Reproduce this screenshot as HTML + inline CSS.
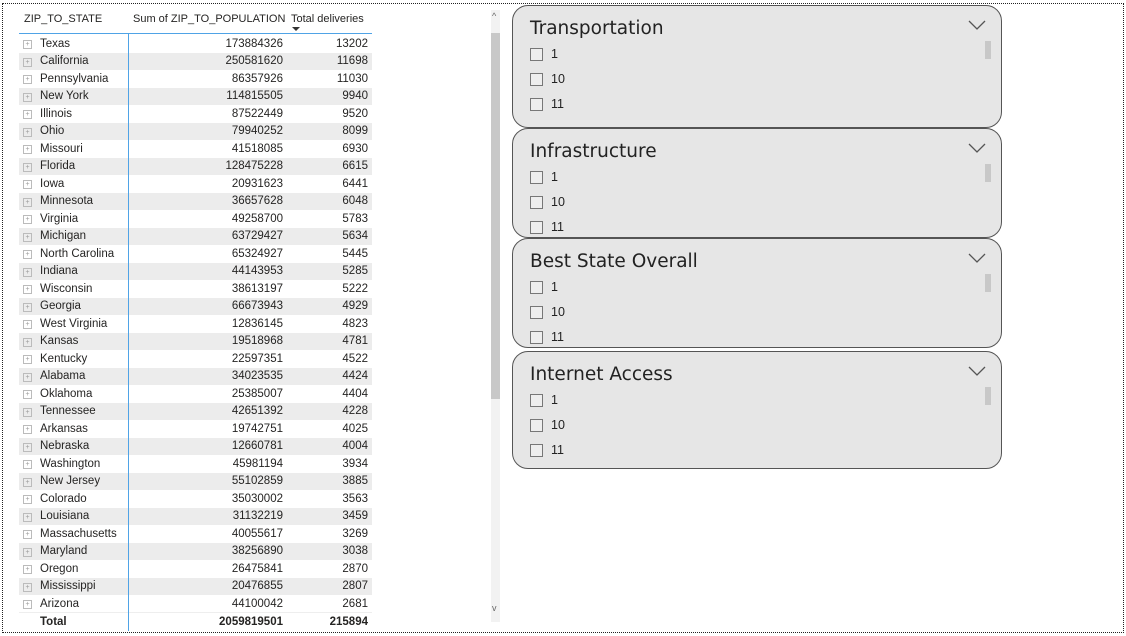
<!DOCTYPE html><html><head><style>
body{margin:0;width:1126px;height:636px;background:#fff;font-family:"Liberation Sans",sans-serif;position:relative;overflow:hidden;font-size:11.5px;color:#252423}
.frame{position:absolute;left:2px;top:3px;width:1120px;height:628px;border:1px dotted #222}
.a{position:absolute;white-space:nowrap}
.row{position:absolute;left:19px;width:353px;height:17.5px}
.row.s{background:#ececec}
.pl{position:absolute;left:4px;top:5px;width:7px;height:7px;border:1px solid #bbb;font-size:7px;line-height:7px;text-align:center;color:#999}
.card{position:absolute;left:512px;width:488px;background:#e6e6e6;border:1px solid #555;border-radius:16px;overflow:hidden}
.t{position:absolute;left:17px;font-family:"DejaVu Sans",sans-serif;font-size:18.5px;color:#222}
.cb{position:absolute;left:17px;width:11px;height:11px;border:1px solid #777;background:#eee}
.lb{position:absolute;left:38px;font-size:12.5px;color:#222}
.sb{position:absolute;left:472px;width:6px;height:18px;background:#c8c8c8}
.chev{position:absolute;left:455px;width:18px;height:10px}
</style></head><body>
<div class="frame"></div>
<div class="a" style="left:24px;top:13px;font-size:11px">ZIP_TO_STATE</div>
<div class="a" style="left:133px;top:13px;font-size:11px">Sum of ZIP_TO_POPULATION</div>
<div class="a" style="left:291px;top:13px;font-size:11px">Total deliveries</div>
<div class="a" style="left:292px;top:27px;width:0;height:0;border-left:4px solid transparent;border-right:4px solid transparent;border-top:4px solid #333"></div>
<div class="a" style="left:19px;top:33px;width:353px;height:1px;background:#4fa3e6"></div>
<div id="rows"></div>
<div class="a" style="left:128px;top:34px;width:1px;height:597px;background:#4fa3e6;z-index:2"></div>
<div class="a" style="left:19px;top:612px;width:353px;height:1px;background:#eee"></div>
<div class="a" style="left:40px;top:616px;font-weight:bold">Total</div>
<div class="a" style="left:183px;top:616px;width:100px;text-align:right;font-weight:bold">2059819501</div>
<div class="a" style="left:300px;top:616px;width:68px;text-align:right;font-weight:bold">215894</div>
<div class="a" style="left:491px;top:10px;width:9px;height:612px;background:#f2f2f2"></div>
<div class="a" style="left:491px;top:33px;width:9px;height:366px;background:#c8c8c8"></div>
<div class="a" style="left:492px;top:11px;font-size:9px;color:#666">^</div>
<div class="a" style="left:492px;top:603px;font-size:9px;color:#666">v</div>
<div id="cards"></div>
<script>
var d=[["Texas",173884326,13202],["California",250581620,11698],["Pennsylvania",86357926,11030],["New York",114815505,9940],["Illinois",87522449,9520],["Ohio",79940252,8099],["Missouri",41518085,6930],["Florida",128475228,6615],["Iowa",20931623,6441],["Minnesota",36657628,6048],["Virginia",49258700,5783],["Michigan",63729427,5634],["North Carolina",65324927,5445],["Indiana",44143953,5285],["Wisconsin",38613197,5222],["Georgia",66673943,4929],["West Virginia",12836145,4823],["Kansas",19518968,4781],["Kentucky",22597351,4522],["Alabama",34023535,4424],["Oklahoma",25385007,4404],["Tennessee",42651392,4228],["Arkansas",19742751,4025],["Nebraska",12660781,4004],["Washington",45981194,3934],["New Jersey",55102859,3885],["Colorado",35030002,3563],["Louisiana",31132219,3459],["Massachusetts",40055617,3269],["Maryland",38256890,3038],["Oregon",26475841,2870],["Mississippi",20476855,2807],["Arizona",44100042,2681]];
var h="";d.forEach(function(r,i){var y=35+i*17.5;h+='<div class="row'+(i%2?' s':'')+'" style="top:'+y+'px"><div class="pl">+</div><div class="a" style="left:21px;top:2.5px">'+r[0]+'</div><div class="a" style="left:164px;top:2.5px;width:100px;text-align:right">'+r[1]+'</div><div class="a" style="left:281px;top:2.5px;width:68px;text-align:right">'+r[2]+'</div></div>';});
document.getElementById("rows").innerHTML=h;
var c=[["Transportation",5,121],["Infrastructure",128,108],["Best State Overall",238,108],["Internet Access",351,116]];
var g="";c.forEach(function(k){g+='<div class="card" style="top:'+k[1]+'px;height:'+k[2]+'px"><div class="t" style="top:12px">'+k[0]+'</div><svg class="chev" style="top:14px" viewBox="0 0 18 10"><path d="M1 1L9 9L17 1" fill="none" stroke="#555" stroke-width="1.3"/></svg><div class="sb" style="top:35px"></div>';[0,25,50].forEach(function(o){g+='<div class="cb" style="top:'+(42+o)+'px"></div><div class="lb" style="top:'+(41+o)+'px">'+(o==0?1:o==25?10:11)+'</div>';});g+='</div>';});
document.getElementById("cards").innerHTML=g;
</script>
</body></html>
